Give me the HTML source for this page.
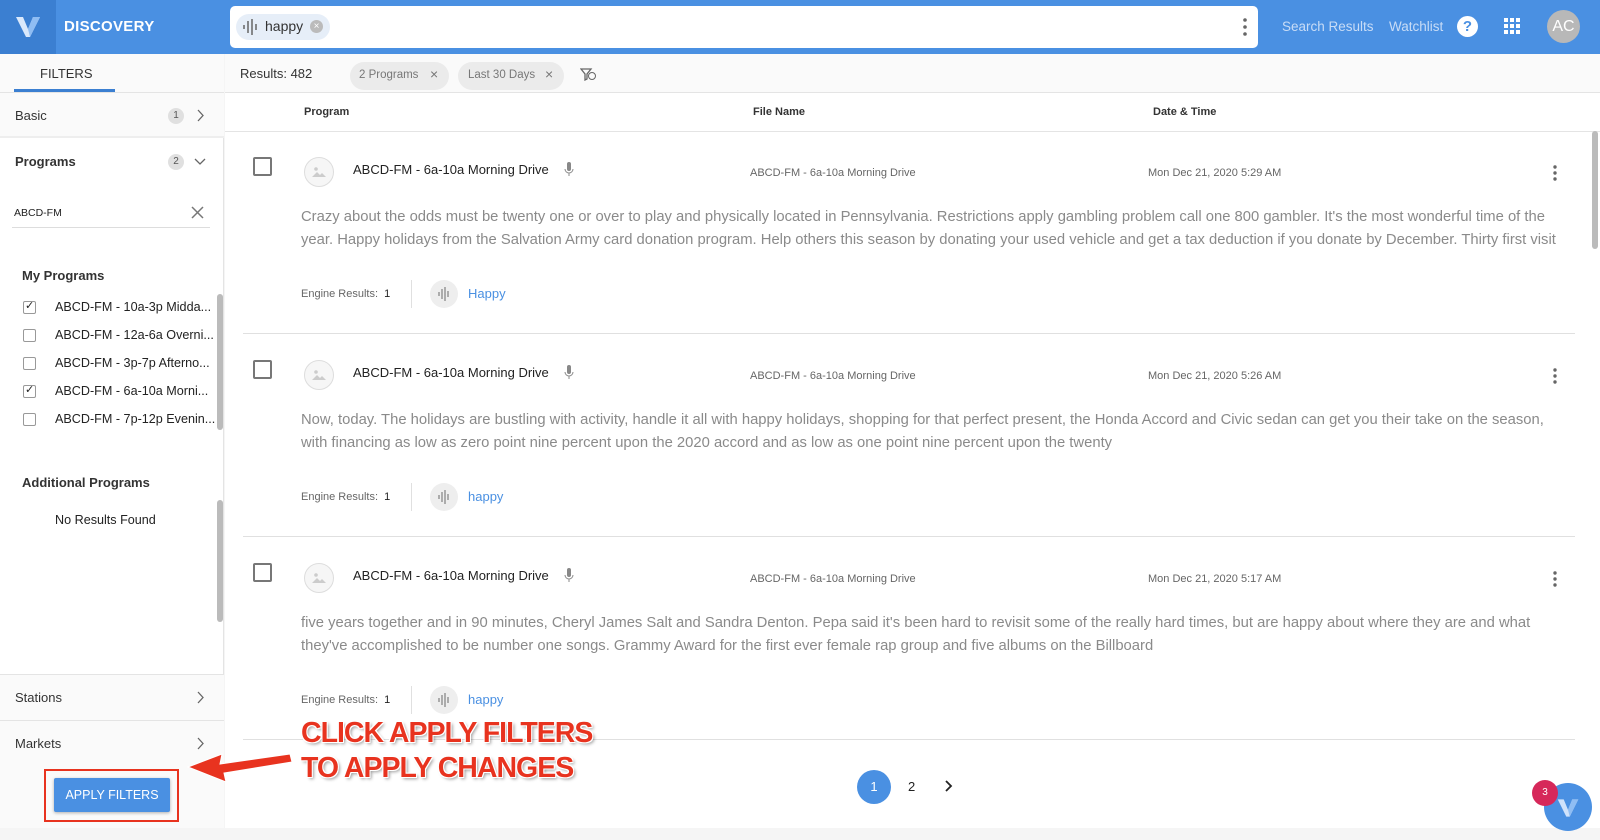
<!DOCTYPE html>
<html><head><meta charset="utf-8"><style>
*{box-sizing:border-box;margin:0;padding:0}
body{width:1600px;height:840px;overflow:hidden;background:#f5f5f5;font-family:"Liberation Sans",sans-serif;position:relative;color:#222}
.a{position:absolute}
.hdr{left:0;top:0;width:1600px;height:54px;background:#4a90e2}
.t{position:absolute;white-space:nowrap}
.cb{position:absolute;width:13px;height:13px;border:1.5px solid #999;border-radius:2px;background:#fff}
.row{position:absolute;left:243px;width:1332px;height:203px;border-bottom:1px solid #e0e0e0}
.sm{font-size:11px;color:#666}
.para{font-size:14.8px;color:#8a8a8a;line-height:23px;width:1272px}
.li{font-size:12.6px}
</style></head><body>
<div class="a hdr"></div>
<div class="a" style="left:0;top:0;width:56px;height:54px;background:#3b7fd1"></div>
<svg class="a" style="left:14px;top:13px" width="28" height="28" viewBox="0 0 28 28"><path d="M2 4 L9 4 L14 16 L19 4 L26 4 L16 24 L12 24Z" fill="#d9e8fb"/><path d="M19 4 L26 4 L16 24 L14 16Z" fill="#8fbdf3"/></svg>
<div class="t" style="left:64px;top:18px;color:#fff;font-size:15px;font-weight:bold;letter-spacing:.3px">DISCOVERY</div>
<div class="a" style="left:230px;top:6px;width:1028px;height:42px;background:#fff;border-radius:5px"></div>
<div class="a" style="left:236px;top:14px;width:94px;height:26px;background:#e6eef8;border-radius:13px"></div>
<svg class="a" style="left:242px;top:18px" width="16" height="18"><g stroke="#666" stroke-width="1.5"><line x1="2" y1="7" x2="2" y2="11"/><line x1="6" y1="3" x2="6" y2="15"/><line x1="10" y1="1" x2="10" y2="17"/><line x1="14" y1="6" x2="14" y2="12"/></g></svg>
<div class="t" style="left:265px;top:18px;font-size:14px;color:#333">happy</div>
<div class="a" style="left:310px;top:20px;width:13px;height:13px;border-radius:50%;background:#bbb;color:#fff;font-size:10px;text-align:center;line-height:13px">×</div>
<svg class="a" style="left:1242px;top:17px" width="6" height="20"><g fill="#666"><circle cx="3" cy="3" r="1.8"/><circle cx="3" cy="10" r="1.8"/><circle cx="3" cy="17" r="1.8"/></g></svg>
<div class="t" style="left:1282px;top:19px;color:#c8dcf6;font-size:13.5px">Search Results</div>
<div class="t" style="left:1389px;top:19px;color:#c8dcf6;font-size:13.5px">Watchlist</div>
<div class="a" style="left:1457px;top:16px;width:21px;height:21px;border-radius:50%;background:#fff;color:#4a90e2;font-weight:bold;font-size:15px;text-align:center;line-height:21px">?</div>
<svg class="a" style="left:1504px;top:18px" width="17" height="17"><g fill="#fff"><rect x="0" y="0" width="4" height="4"/><rect x="6" y="0" width="4" height="4"/><rect x="12" y="0" width="4" height="4"/><rect x="0" y="6" width="4" height="4"/><rect x="6" y="6" width="4" height="4"/><rect x="12" y="6" width="4" height="4"/><rect x="0" y="12" width="4" height="4"/><rect x="6" y="12" width="4" height="4"/><rect x="12" y="12" width="4" height="4"/></g></svg>
<div class="a" style="left:1547px;top:10px;width:33px;height:33px;border-radius:50%;background:#b8b8b8;color:#fff;font-size:16px;text-align:center;line-height:33px">AC</div>

<!-- sidebar -->
<div class="a" style="left:0;top:54px;width:224px;height:774px;background:#fff;border-right:1px solid #e4e4e4"></div>
<div class="a" style="left:0;top:54px;width:224px;height:39px;background:#fafafa;border-bottom:1px solid #e4e4e4"></div>
<div class="t" style="left:40px;top:66px;font-size:13px;color:#333">FILTERS</div>
<div class="a" style="left:14px;top:89px;width:101px;height:3px;background:#3b7fd1"></div>
<div class="a" style="left:0;top:93px;width:224px;height:45px;background:#fafafa;border-bottom:2px solid #eee"></div>
<div class="t" style="left:15px;top:108px;font-size:13px;color:#333">Basic</div>
<div class="a" style="left:168px;top:108px;width:16px;height:16px;border-radius:50%;background:#e0e0e0;font-size:10px;text-align:center;line-height:16px;color:#555">1</div>
<svg class="a" style="left:197px;top:109px" width="8" height="13"><path d="M1 1L6 6.5L1 12" fill="none" stroke="#666" stroke-width="1.3"/></svg>
<div class="t" style="left:15px;top:154px;font-size:13px;font-weight:bold;color:#333">Programs</div>
<div class="a" style="left:168px;top:154px;width:16px;height:16px;border-radius:50%;background:#e0e0e0;font-size:10px;text-align:center;line-height:16px;color:#555">2</div>
<svg class="a" style="left:194px;top:158px" width="12" height="8"><path d="M1 1 L6 6 L11 1" fill="none" stroke="#666" stroke-width="1.3"/></svg>
<div class="t" style="left:14px;top:207px;font-size:10.5px;color:#222">ABCD-FM</div>
<svg class="a" style="left:191px;top:206px" width="13" height="13"><path d="M1 1L12 12M12 1L1 12" stroke="#777" stroke-width="1.5"/></svg>
<div class="a" style="left:12px;top:227px;width:198px;height:1px;background:#ddd"></div>
<div class="t" style="left:22px;top:268px;font-size:13px;font-weight:bold;color:#333">My Programs</div>
<div class="cb" style="left:23px;top:301px"></div><div class="t" style="left:25px;top:299px;font-size:11px">✓</div>
<div class="t li" style="left:55px;top:300px">ABCD-FM - 10a-3p Midda...</div>
<div class="cb" style="left:23px;top:329px"></div>
<div class="t li" style="left:55px;top:328px">ABCD-FM - 12a-6a Overni...</div>
<div class="cb" style="left:23px;top:357px"></div>
<div class="t li" style="left:55px;top:356px">ABCD-FM - 3p-7p Afterno...</div>
<div class="cb" style="left:23px;top:385px"></div><div class="t" style="left:25px;top:383px;font-size:11px">✓</div>
<div class="t li" style="left:55px;top:384px">ABCD-FM - 6a-10a Morni...</div>
<div class="cb" style="left:23px;top:413px"></div>
<div class="t li" style="left:55px;top:412px">ABCD-FM - 7p-12p Evenin...</div>
<div class="a" style="left:217px;top:294px;width:6px;height:136px;background:#bbb;border-radius:3px"></div>
<div class="t" style="left:22px;top:475px;font-size:13px;font-weight:bold;color:#333">Additional Programs</div>
<div class="t li" style="left:55px;top:513px">No Results Found</div>
<div class="a" style="left:217px;top:500px;width:6px;height:122px;background:#bbb;border-radius:3px"></div>
<div class="a" style="left:0;top:674px;width:224px;height:92px;background:#fafafa;border-top:1px solid #e4e4e4"></div>
<div class="a" style="left:0;top:720px;width:224px;height:1px;background:#e4e4e4"></div>
<div class="t" style="left:15px;top:690px;font-size:13px;color:#333">Stations</div>
<svg class="a" style="left:197px;top:691px" width="8" height="13"><path d="M1 1L6 6.5L1 12" fill="none" stroke="#666" stroke-width="1.3"/></svg>
<div class="t" style="left:15px;top:736px;font-size:13px;color:#333">Markets</div>
<svg class="a" style="left:197px;top:737px" width="8" height="13"><path d="M1 1L6 6.5L1 12" fill="none" stroke="#666" stroke-width="1.3"/></svg>
<div class="a" style="left:0;top:766px;width:224px;height:62px;background:#fafafa"></div>
<div class="a" style="left:44px;top:769px;width:135px;height:53px;border:2px solid #e8331f"></div>
<div class="a" style="left:54px;top:778px;width:116px;height:34px;background:#4a90e2;border-radius:2px;box-shadow:0 1px 3px rgba(0,0,0,.3);color:#fff;font-size:12.5px;text-align:center;line-height:34px">APPLY FILTERS</div>

<!-- main -->
<div class="a" style="left:225px;top:54px;width:1375px;height:39px;background:#fafafa;border-bottom:1px solid #e4e4e4"></div>
<div class="t" style="left:240px;top:66px;font-size:13px;color:#333">Results: 482</div>
<div class="a" style="left:350px;top:62px;width:99px;height:28px;border-radius:14px;background:#ebebeb"></div>
<div class="t" style="left:359px;top:69px;font-size:11.5px;color:#777">2 Programs</div>
<div class="t" style="left:430px;top:66px;font-size:14px;color:#777">×</div>
<div class="a" style="left:458px;top:62px;width:106px;height:28px;border-radius:14px;background:#ebebeb"></div>
<div class="t" style="left:468px;top:69px;font-size:11.5px;color:#777">Last 30 Days</div>
<div class="t" style="left:545px;top:66px;font-size:14px;color:#777">×</div>
<svg class="a" style="left:580px;top:68px" width="16" height="13"><path d="M1 1H11L7 6V11L5 12V6Z" fill="none" stroke="#666" stroke-width="1.3"/><circle cx="12" cy="8" r="3.5" fill="none" stroke="#666"/></svg>
<div class="a" style="left:225px;top:93px;width:1375px;height:735px;background:#fff"></div>
<div class="a" style="left:225px;top:131px;width:1375px;height:1px;background:#e4e4e4"></div>
<div class="t" style="left:304px;top:106px;font-size:11px;font-weight:bold;color:#333">Program</div>
<div class="t" style="left:753px;top:106px;font-size:11px;font-weight:bold;color:#333">File Name</div>
<div class="t" style="left:1153px;top:106px;font-size:11px;font-weight:bold;color:#333">Date &amp; Time</div>
<div class="a" style="left:1592px;top:131px;width:6px;height:118px;background:#bbb;border-radius:3px"></div>

<div class="row" style="top:131px"></div>
<div class="row" style="top:334px"></div>
<div class="row" style="top:537px"></div>

<!-- row 1 -->
<div class="a" style="left:253px;top:157px;width:19px;height:19px;border:2px solid #777;border-radius:2px"></div>
<div class="a" style="left:304px;top:157px;width:30px;height:30px;border-radius:50%;border:1px solid #ddd;background:#f6f6f6"></div>
<svg class="a" style="left:312px;top:166px" width="14" height="11"><circle cx="4" cy="3" r="1.8" fill="#ccc"/><path d="M0 11L5 6L8 9L10 7L14 11Z" fill="#ccc"/></svg>
<div class="t" style="left:353px;top:162px;font-size:13px;color:#222">ABCD-FM - 6a-10a Morning Drive</div>
<svg class="a" style="left:564px;top:162px" width="10" height="15"><rect x="3" y="0" width="4" height="9" rx="2" fill="#888"/><path d="M1 7a4 4 0 0 0 8 0M5 11v3" stroke="#888" fill="none"/></svg>
<div class="t sm" style="left:750px;top:167px">ABCD-FM - 6a-10a Morning Drive</div>
<div class="t sm" style="left:1148px;top:167px">Mon Dec 21, 2020 5:29 AM</div>
<svg class="a" style="left:1552px;top:164px" width="6" height="18"><g fill="#666"><circle cx="3" cy="3" r="1.7"/><circle cx="3" cy="9" r="1.7"/><circle cx="3" cy="15" r="1.7"/></g></svg>
<div class="t para" style="left:301px;top:206px;white-space:normal">Crazy about the odds must be twenty one or over to play and physically located in Pennsylvania. Restrictions apply gambling problem call one 800 gambler. It's the most wonderful time of the year. Happy holidays from the Salvation Army card donation program. Help others this season by donating your used vehicle and get a tax deduction if you donate by December. Thirty first visit</div>
<div class="t sm" style="left:301px;top:288px">Engine Results:&nbsp; <b style="color:#222;font-weight:normal">1</b></div>
<div class="a" style="left:411px;top:280px;width:1px;height:28px;background:#e0e0e0"></div>
<div class="a" style="left:430px;top:280px;width:28px;height:28px;border-radius:50%;background:#eee"></div>
<div class="t" style="left:468px;top:286px;font-size:13px;color:#4a90e2">Happy</div>

<!-- row 2 -->
<div class="a" style="left:253px;top:360px;width:19px;height:19px;border:2px solid #777;border-radius:2px"></div>
<div class="a" style="left:304px;top:360px;width:30px;height:30px;border-radius:50%;border:1px solid #ddd;background:#f6f6f6"></div>
<svg class="a" style="left:312px;top:369px" width="14" height="11"><circle cx="4" cy="3" r="1.8" fill="#ccc"/><path d="M0 11L5 6L8 9L10 7L14 11Z" fill="#ccc"/></svg>
<div class="t" style="left:353px;top:365px;font-size:13px;color:#222">ABCD-FM - 6a-10a Morning Drive</div>
<svg class="a" style="left:564px;top:365px" width="10" height="15"><rect x="3" y="0" width="4" height="9" rx="2" fill="#888"/><path d="M1 7a4 4 0 0 0 8 0M5 11v3" stroke="#888" fill="none"/></svg>
<div class="t sm" style="left:750px;top:370px">ABCD-FM - 6a-10a Morning Drive</div>
<div class="t sm" style="left:1148px;top:370px">Mon Dec 21, 2020 5:26 AM</div>
<svg class="a" style="left:1552px;top:367px" width="6" height="18"><g fill="#666"><circle cx="3" cy="3" r="1.7"/><circle cx="3" cy="9" r="1.7"/><circle cx="3" cy="15" r="1.7"/></g></svg>
<div class="t para" style="left:301px;top:409px;white-space:normal">Now, today. The holidays are bustling with activity, handle it all with happy holidays, shopping for that perfect present, the Honda Accord and Civic sedan can get you their take on the season, with financing as low as zero point nine percent upon the 2020 accord and as low as one point nine percent upon the twenty</div>
<div class="t sm" style="left:301px;top:491px">Engine Results:&nbsp; <b style="color:#222;font-weight:normal">1</b></div>
<div class="a" style="left:411px;top:483px;width:1px;height:28px;background:#e0e0e0"></div>
<div class="a" style="left:430px;top:483px;width:28px;height:28px;border-radius:50%;background:#eee"></div>
<div class="t" style="left:468px;top:489px;font-size:13px;color:#4a90e2">happy</div>

<!-- row 3 -->
<div class="a" style="left:253px;top:563px;width:19px;height:19px;border:2px solid #777;border-radius:2px"></div>
<div class="a" style="left:304px;top:563px;width:30px;height:30px;border-radius:50%;border:1px solid #ddd;background:#f6f6f6"></div>
<svg class="a" style="left:312px;top:572px" width="14" height="11"><circle cx="4" cy="3" r="1.8" fill="#ccc"/><path d="M0 11L5 6L8 9L10 7L14 11Z" fill="#ccc"/></svg>
<div class="t" style="left:353px;top:568px;font-size:13px;color:#222">ABCD-FM - 6a-10a Morning Drive</div>
<svg class="a" style="left:564px;top:568px" width="10" height="15"><rect x="3" y="0" width="4" height="9" rx="2" fill="#888"/><path d="M1 7a4 4 0 0 0 8 0M5 11v3" stroke="#888" fill="none"/></svg>
<div class="t sm" style="left:750px;top:573px">ABCD-FM - 6a-10a Morning Drive</div>
<div class="t sm" style="left:1148px;top:573px">Mon Dec 21, 2020 5:17 AM</div>
<svg class="a" style="left:1552px;top:570px" width="6" height="18"><g fill="#666"><circle cx="3" cy="3" r="1.7"/><circle cx="3" cy="9" r="1.7"/><circle cx="3" cy="15" r="1.7"/></g></svg>
<div class="t para" style="left:301px;top:612px;white-space:normal">five years together and in 90 minutes, Cheryl James Salt and Sandra Denton. Pepa said it's been hard to revisit some of the really hard times, but are happy about where they are and what they've accomplished to be number one songs. Grammy Award for the first ever female rap group and five albums on the Billboard</div>
<div class="t sm" style="left:301px;top:694px">Engine Results:&nbsp; <b style="color:#222;font-weight:normal">1</b></div>
<div class="a" style="left:411px;top:686px;width:1px;height:28px;background:#e0e0e0"></div>
<div class="a" style="left:430px;top:686px;width:28px;height:28px;border-radius:50%;background:#eee"></div>
<div class="t" style="left:468px;top:692px;font-size:13px;color:#4a90e2">happy</div>

<svg class="a" style="left:436px;top:286px" width="16" height="16"><g stroke="#888" stroke-width="1.3"><line x1="3" y1="6" x2="3" y2="10"/><line x1="6" y1="3" x2="6" y2="13"/><line x1="9" y1="1" x2="9" y2="15"/><line x1="12" y1="5" x2="12" y2="11"/></g></svg>
<svg class="a" style="left:436px;top:489px" width="16" height="16"><g stroke="#888" stroke-width="1.3"><line x1="3" y1="6" x2="3" y2="10"/><line x1="6" y1="3" x2="6" y2="13"/><line x1="9" y1="1" x2="9" y2="15"/><line x1="12" y1="5" x2="12" y2="11"/></g></svg>
<svg class="a" style="left:436px;top:692px" width="16" height="16"><g stroke="#888" stroke-width="1.3"><line x1="3" y1="6" x2="3" y2="10"/><line x1="6" y1="3" x2="6" y2="13"/><line x1="9" y1="1" x2="9" y2="15"/><line x1="12" y1="5" x2="12" y2="11"/></g></svg>

<!-- pagination -->
<div class="a" style="left:857px;top:770px;width:34px;height:34px;border-radius:50%;background:#4a90e2;color:#fff;font-size:13px;text-align:center;line-height:34px">1</div>
<div class="t" style="left:908px;top:779px;font-size:13px">2</div>
<svg class="a" style="left:945px;top:780px" width="8" height="12"><path d="M1 1L6 6L1 11" fill="none" stroke="#222" stroke-width="1.8"/></svg>
<div class="a" style="left:0;top:828px;width:1600px;height:12px;background:#f5f5f5"></div>

<!-- fab -->
<div class="a" style="left:1544px;top:783px;width:48px;height:48px;border-radius:50%;background:#4a90e2"></div>
<svg class="a" style="left:1556px;top:796px" width="24" height="24" viewBox="0 0 28 28"><path d="M2 4 L9 4 L14 16 L19 4 L26 4 L16 24 L12 24Z" fill="#cfe2fb"/><path d="M19 4 L26 4 L16 24 L14 16Z" fill="#8fbdf3"/></svg>
<div class="a" style="left:1532px;top:780px;width:26px;height:26px;border-radius:50%;background:#d6285a;color:#fff;font-size:10px;text-align:center;line-height:26px">3</div>

<!-- annotation -->
<svg class="a" style="left:180px;top:740px" width="120" height="50"><path d="M110 14 L40 24 L42 14 L8 27 L46 42 L44 33 L112 22Z" fill="#e8331f" stroke="#fff" stroke-width="1"/></svg>
<div class="t" style="left:301px;top:716px;font-size:28.5px;font-weight:bold;color:#e8331f;letter-spacing:-1px;line-height:35px;text-shadow:1px 1px 0 #fff,-1px -1px 0 #fff,1px -1px 0 #fff,-1px 1px 0 #fff,2px 2px 3px rgba(0,0,0,.4)">CLICK APPLY FILTERS<br>TO APPLY CHANGES</div>
</body></html>
